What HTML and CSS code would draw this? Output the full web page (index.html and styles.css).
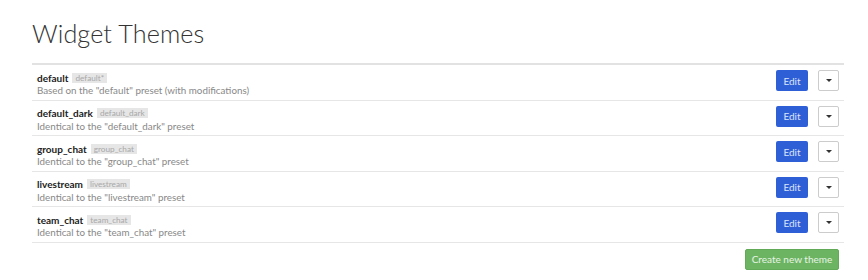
FILE: index.html
```html
<!DOCTYPE html>
<html>
<head>
<meta charset="utf-8">
<link rel="stylesheet" href="styles.css">
</head>
<body>
<div class="page">
  <h1 class="title">Widget Themes</h1>
  <div class="list">
    <div class="row">
      <div class="info">
        <div class="name-line"><span class="name">default</span><span class="tag">default*</span></div>
        <div class="desc">Based on the "default" preset (with modifications)</div>
      </div>
      <div class="actions"><button class="btn-edit">Edit</button><button class="btn-drop"><span class="caret"></span></button></div>
    </div>
    <div class="row">
      <div class="info">
        <div class="name-line"><span class="name">default_dark</span><span class="tag">default_dark</span></div>
        <div class="desc">Identical to the "default_dark" preset</div>
      </div>
      <div class="actions"><button class="btn-edit">Edit</button><button class="btn-drop"><span class="caret"></span></button></div>
    </div>
    <div class="row">
      <div class="info">
        <div class="name-line"><span class="name">group_chat</span><span class="tag">group_chat</span></div>
        <div class="desc">Identical to the "group_chat" preset</div>
      </div>
      <div class="actions"><button class="btn-edit">Edit</button><button class="btn-drop"><span class="caret"></span></button></div>
    </div>
    <div class="row">
      <div class="info">
        <div class="name-line"><span class="name">livestream</span><span class="tag">livestream</span></div>
        <div class="desc">Identical to the "livestream" preset</div>
      </div>
      <div class="actions"><button class="btn-edit">Edit</button><button class="btn-drop"><span class="caret"></span></button></div>
    </div>
    <div class="row">
      <div class="info">
        <div class="name-line"><span class="name">team_chat</span><span class="tag">team_chat</span></div>
        <div class="desc">Identical to the "team_chat" preset</div>
      </div>
      <div class="actions"><button class="btn-edit">Edit</button><button class="btn-drop"><span class="caret"></span></button></div>
    </div>
  </div>
  <div class="footer"><button class="btn-create">Create new theme</button></div>
</div>
</body>
</html>
```
FILE: styles.css
```css
* { box-sizing: border-box; }
body {
  margin: 0;
  background: #fff;
  font-family: Lato, "Open Sans", sans-serif;
  color: #333;
}
.page {
  padding: 0 24px 0 32px;
}
.title {
  margin: 0;
  padding-top: 18px;
  height: 63px;
  font-weight: 300;
  font-size: 25.2px;
  line-height: 30px;
  color: #333;
  letter-spacing: 0.1px;
}
.list {
  border-top: 2px solid #e2e2e2;
}
.row {
  display: flex;
  align-items: flex-start;
  justify-content: space-between;
  height: 35.5px;
  padding: 5px 5px 0;
  border-bottom: 1px solid #e6e6e6;
}
.info {
  display: flex;
  flex-direction: column;
}
.name-line {
  display: flex;
  align-items: center;
  height: 13px;
  margin-top: 1px;
}
.name {
  font-weight: 700;
  font-size: 10px;
  color: #222;
}
.tag {
  margin-left: 4px;
  background: #e6e6e6;
  color: #a8a8a8;
  font-size: 8.2px;
  padding: 0 3px;
  line-height: 10px;
}
.desc {
  font-size: 9.8px;
  color: #888;
  line-height: 12px;
}
.actions {
  display: flex;
  align-items: center;
  gap: 10px;
}
button {
  font-family: Lato, "Open Sans", sans-serif;
  cursor: pointer;
}
.btn-edit {
  width: 32px;
  height: 21px;
  background: #2f5fd6;
  border: none;
  border-radius: 2px;
  color: #dde4fa;
  font-size: 10px;
  padding: 0;
}
.btn-drop {
  width: 21px;
  height: 21px;
  background: #fff;
  border: 1px solid #ccc;
  border-radius: 2px;
  padding: 0;
  display: flex;
  align-items: center;
  justify-content: center;
}
.caret {
  width: 0;
  height: 0;
  border-left: 3px solid transparent;
  border-right: 3px solid transparent;
  border-top: 3px solid #333;
}
.footer {
  display: flex;
  justify-content: flex-end;
  padding: 6px 5px 0 0;
}
.btn-create {
  width: 94px;
  height: 21px;
  background: #6cb462;
  border: 1px solid #62aa58;
  border-radius: 2px;
  color: #e8f4e6;
  font-size: 10px;
  padding: 0;
}
```
